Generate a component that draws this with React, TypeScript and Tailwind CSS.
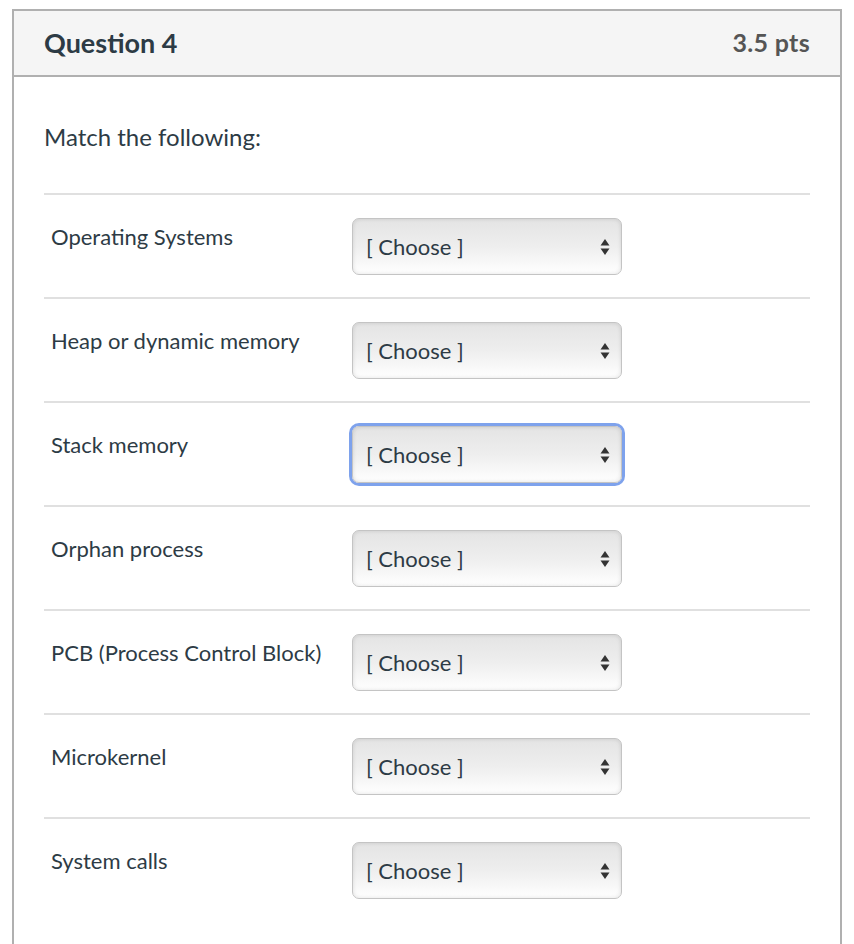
import React from 'react';

const items = [
  'Operating Systems',
  'Heap or dynamic memory',
  'Stack memory',
  'Orphan process',
  'PCB (Process Control Block)',
  'Microkernel',
  'System calls',
];

const Arrows: React.FC = () => (
  <svg width="10" height="20" viewBox="0 0 10 20" className="shrink-0">
    <path d="M5 2 L9.5 8.5 H0.5 Z" fill="#333" />
    <path d="M5 18 L9.5 11.5 H0.5 Z" fill="#333" />
  </svg>
);

const ChooseSelect: React.FC<{ focused?: boolean }> = ({ focused }) => (
  <div
    className={`w-[270px] h-[57px] rounded-[7px] border border-[#c4c4c4] bg-gradient-to-b from-[#e4e4e4] via-[#eeeeee] to-white shadow-[inset_0_0_4px_rgba(0,0,0,0.12)] flex items-center justify-between pl-[13px] pr-[11px] ${
      focused ? 'ring-[3px] ring-[#7ea2ec]' : ''
    }`}
  >
    <span className="text-[22px] text-[#2d3b45] leading-none">[ Choose ]</span>
    <Arrows />
  </div>
);

export default function App() {
  return (
    <div
      className="h-[944px] overflow-hidden bg-white pt-[9px] px-[12px] flex flex-col"
      style={{ fontFamily: 'Lato, "Open Sans", sans-serif' }}
    >
      <div className="flex-1 border-2 border-b-0 border-[#b0b0b0] bg-white">
        {/* Header */}
        <div className="h-[66px] bg-[#f5f5f5] border-b-2 border-[#b0b0b0] flex items-center justify-between pl-[30px] pr-[30px]">
          <h2 className="text-[27px] font-bold text-[#2d3b45]">Question 4</h2>
          <span className="text-[25px] font-bold text-[#555] tracking-[0.3px]">3.5 pts</span>
        </div>

        {/* Body */}
        <div className="px-[30px] pt-[44px]">
          <p className="text-[24px] text-[#2d3b45] leading-[32px]">Match the following:</p>
          <div className="mt-[40px]">
            {items.map((label, i) => (
              <div key={label} className="border-t-2 border-[#e0e0e0] flex items-start pt-[23px] pb-[22px]">
                <div className="w-[308px] pl-[7px] pt-[4px] text-[22px] leading-[30px] text-[#2d3b45]">{label}</div>
                <ChooseSelect focused={i === 2} />
              </div>
            ))}
          </div>
        </div>
      </div>
    </div>
  );
}
